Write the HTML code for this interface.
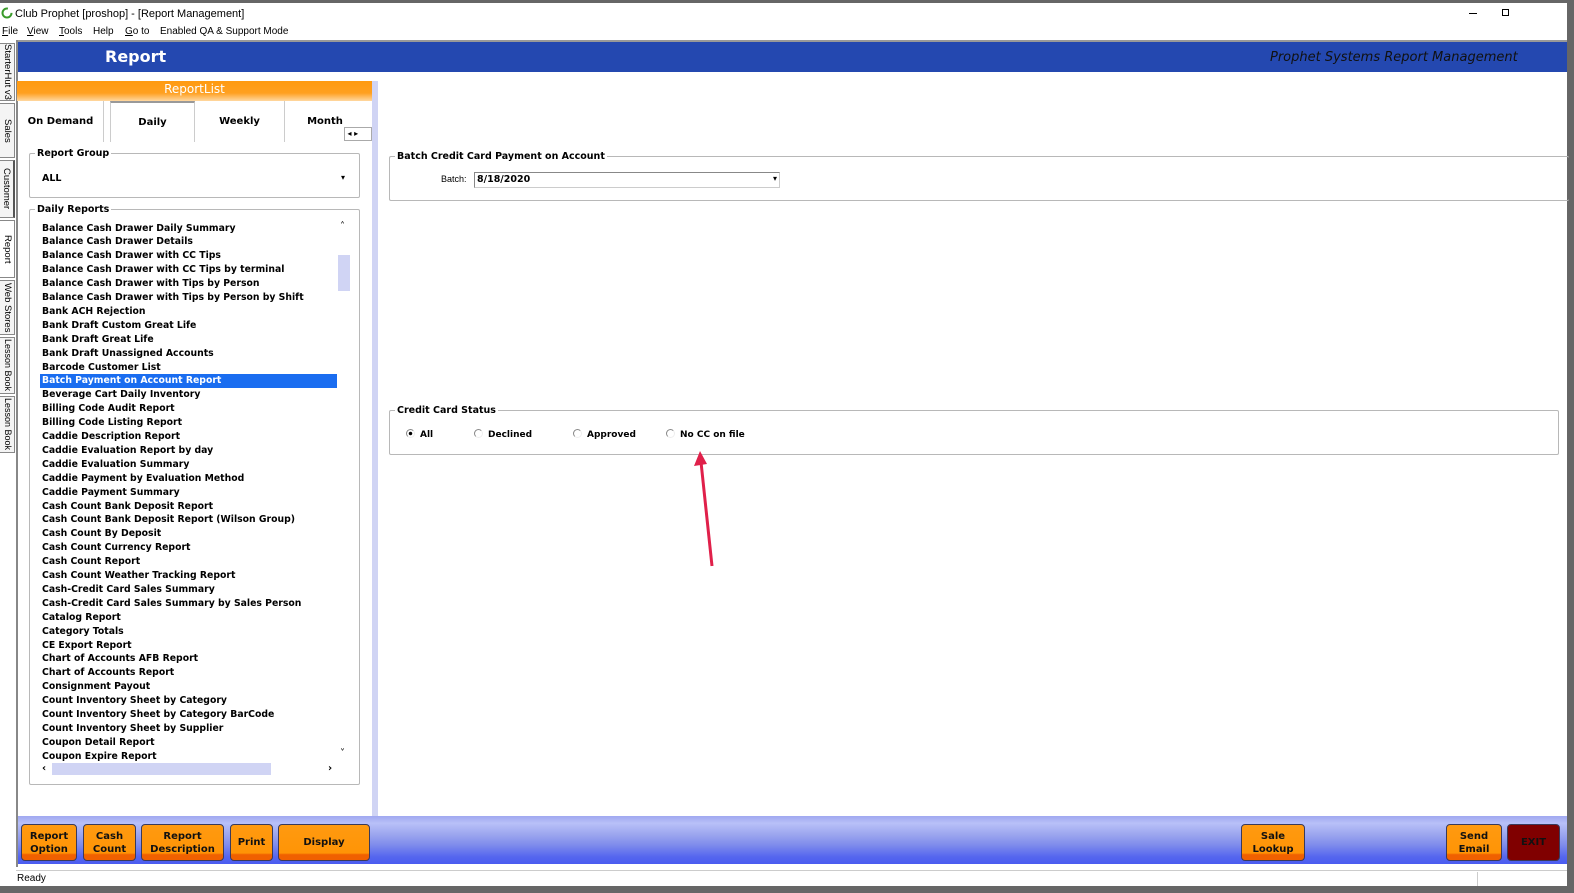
<!DOCTYPE html>
<html><head><meta charset="utf-8"><style>
*{margin:0;padding:0;box-sizing:border-box}
body{width:1574px;height:893px;background:#fff;font-family:"DejaVu Sans","Liberation Sans",sans-serif;position:relative;overflow:hidden}
.a{position:absolute}
.w{font-family:"Liberation Sans",sans-serif;font-size:11px;color:#000;white-space:nowrap}
fieldset{position:absolute;border:1px solid #b8b8b8;border-radius:2px}
legend{font-size:9.5px;font-weight:bold;padding:0 2px;margin-left:5px}
.li{position:absolute;left:42px;font-size:9.3px;font-weight:bold;color:#000;white-space:nowrap}
.btn{position:absolute;top:824px;height:37px;background:linear-gradient(#ff9a10 0%,#ff9406 80%,#f06000 85%,#f06000 100%);border:1px solid #3a3a5a;border-radius:4px;font-size:10px;font-weight:bold;text-align:center;display:flex;align-items:center;justify-content:center;line-height:13px;color:#111}
.vt{position:absolute;left:0;width:15px;border:1px solid #888;border-left:none;background:#f4f4f4;font-family:"Liberation Sans",sans-serif;font-size:9.5px;writing-mode:vertical-rl;text-align:center;line-height:13px;white-space:nowrap;overflow:hidden}
.tab{position:absolute;top:101px;height:41px;font-size:10px;font-weight:bold;display:flex;align-items:center;justify-content:center;border-right:1px solid #ccc}
.r{display:inline-block;width:9px;height:9px;border-radius:50%;border:1px solid #888;border-right-color:#eee;border-bottom-color:#eee;vertical-align:middle;margin-right:5px;position:relative;top:-1px}
</style></head><body>
<div class="a" style="left:0;top:0;width:1574px;height:3px;background:#666"></div>
<div class="a" style="left:1567px;top:0;width:7px;height:893px;background:#666"></div>
<div class="a" style="left:0;top:886px;width:1574px;height:7px;background:#666"></div>
<svg class="a" style="left:1px;top:7px" width="12" height="12"><circle cx="6" cy="6" r="4.5" fill="none" stroke="#3a9a2a" stroke-width="2" stroke-dasharray="22 6"/></svg>
<div class="a w" style="left:15px;top:8px">Club Prophet [proshop] - [Report Management]</div>
<div class="a" style="left:1469px;top:13px;width:8px;height:1px;background:#000"></div>
<div class="a" style="left:1502px;top:9px;width:7px;height:7px;border:1px solid #000"></div>
<div class="a w" style="left:2px;top:26px;font-size:10px"><u>F</u>ile</div>
<div class="a w" style="left:27px;top:26px;font-size:10px"><u>V</u>iew</div>
<div class="a w" style="left:59px;top:26px;font-size:10px"><u>T</u>ools</div>
<div class="a w" style="left:93px;top:26px;font-size:10px">Help</div>
<div class="a w" style="left:125px;top:26px;font-size:10px"><u>G</u>o to</div>
<div class="a w" style="left:160px;top:26px;font-size:10px">Enabled QA &amp; Support Mode</div>
<div class="vt" style="top:43px;height:58px">StarterHut v3</div>
<div class="vt" style="top:103px;height:55px">Sales</div>
<div class="vt" style="top:160px;height:58px;border-right:2px solid #555">Customer</div>
<div class="vt" style="top:220px;height:58px;background:#fff">Report</div>
<div class="vt" style="top:280px;height:55px">Web Stores</div>
<div class="vt" style="top:337px;height:57px;font-size:9px">Lesson Book</div>
<div class="vt" style="top:396px;height:57px;font-size:9px">Lesson Book</div>
<div class="a" style="left:16px;top:40px;width:1551px;height:2px;background:#999"></div>
<div class="a" style="left:16px;top:40px;width:2px;height:827px;background:#888"></div>
<div class="a" style="left:18px;top:42px;width:1549px;height:30px;background:#2448b0"></div>
<div class="a" style="left:105px;top:47px;color:#fff;font-size:16px;font-weight:bold">Report</div>
<div class="a" style="left:1270px;top:50px;color:#111;font-size:13px;font-style:italic">Prophet Systems Report Management</div>
<div class="a" style="left:17px;top:81px;width:355px;height:20px;background:linear-gradient(#ff9a10 0%,#ffa020 60%,#ffd8a0 100%)"></div>
<div class="a" style="left:17px;top:82px;width:355px;text-align:center;color:#fff;font-size:12px">ReportList</div>
<div class="a" style="left:372px;top:81px;width:6px;height:735px;background:#d0d4f4"></div>
<div class="tab" style="left:18px;width:86px">On Demand</div>
<div class="tab" style="left:110px;width:85px;border-top:2px solid #999;border-left:1px solid #ccc">Daily</div>
<div class="tab" style="left:195px;width:90px">Weekly</div>
<div class="tab" style="left:285px;width:80px;border-right:none">Month</div>
<div class="a" style="left:344px;top:127px;width:28px;height:14px;border:1px solid #aaa;font-size:8px;line-height:12px">&nbsp;◂ ▸</div>
<fieldset style="left:29px;top:148px;width:331px;height:50px"><legend>Report Group</legend>
<div style="position:absolute;left:12px;top:14px;font-size:9.5px;font-weight:bold">ALL</div>
<div style="position:absolute;left:311px;top:14px;font-size:8px">▾</div></fieldset>
<fieldset style="left:29px;top:204px;width:331px;height:581px"><legend>Daily Reports</legend></fieldset>
<div class="a" style="left:40px;top:374px;width:297px;height:14px;background:#1a6df0"></div>
<div class="a" style="left:338px;top:255px;width:12px;height:36px;background:#d0d4f4"></div>
<div class="a" style="left:52px;top:763px;width:219px;height:12px;background:#d0d4f4"></div>
<div class="a" style="left:340px;top:221px;font-size:10px">˄</div>
<div class="a" style="left:340px;top:748px;font-size:10px">˅</div>
<div class="a" style="left:42px;top:763px;font-size:10px;font-weight:bold">‹</div>
<div class="a" style="left:328px;top:763px;font-size:10px;font-weight:bold">›</div>
<div id="list"></div>
<fieldset style="left:389px;top:151px;width:1180px;height:50px;border-right:none"><legend>Batch Credit Card Payment on Account</legend>
<div style="position:absolute;left:51px;top:12px;font-size:9px;font-family:'Liberation Sans',sans-serif">Batch:</div>
<div style="position:absolute;left:84px;top:10px;width:306px;height:16px;border:1px solid #888;border-right-color:#ccc;border-bottom-color:#ccc;font-size:9.5px;font-weight:bold;padding:1px 2px">8/18/2020<span style="position:absolute;right:2px;top:1px;font-size:8px">▾</span></div></fieldset>
<fieldset style="left:389px;top:405px;width:1170px;height:50px"><legend>Credit Card Status</legend>
<div style="position:absolute;left:16px;top:14px;font-size:9px;font-weight:bold;white-space:nowrap"><span class="r" style="background:radial-gradient(#000 30%,transparent 40%)"></span>All</div>
<div style="position:absolute;left:84px;top:14px;font-size:9px;font-weight:bold"><span class="r"></span>Declined</div>
<div style="position:absolute;left:183px;top:14px;font-size:9px;font-weight:bold"><span class="r"></span>Approved</div>
<div style="position:absolute;left:276px;top:14px;font-size:9px;font-weight:bold;white-space:nowrap"><span class="r"></span>No CC on file</div></fieldset>
<svg class="a" style="left:690px;top:448px" width="30" height="125"><line x1="22" y1="118" x2="11" y2="14" stroke="#e0204a" stroke-width="3"/><polygon points="10,3 4,18 17,16" fill="#e0204a"/></svg>
<div class="a" style="left:18px;top:816px;width:1549px;height:48px;background:linear-gradient(#a0a8f0 0%,#b8c0f8 15%,#9aa4ee 40%,#7f8cec 60%,#5566ee 85%,#4a5cf0 100%)"></div>
<div class="btn" style="left:21px;width:56px">Report<br>Option</div>
<div class="btn" style="left:83px;width:53px">Cash<br>Count</div>
<div class="btn" style="left:141px;width:83px">Report<br>Description</div>
<div class="btn" style="left:230px;width:43px">Print</div>
<div class="btn" style="left:278px;width:92px">Display</div>
<div class="btn" style="left:1241px;width:64px">Sale<br>Lookup</div>
<div class="btn" style="left:1446px;width:56px">Send<br>Email</div>
<div class="btn" style="left:1507px;width:53px;background:#800000;color:#111">EXIT</div>
<div class="a w" style="left:17px;top:873px;font-size:10px">Ready</div>
<div class="a" style="left:16px;top:870px;width:1551px;height:1px;background:#ccc"></div>
<div class="a" style="left:1477px;top:872px;width:1px;height:14px;background:#ccc"></div>
<script>
var t=["Balance Cash Drawer Daily Summary","Balance Cash Drawer Details","Balance Cash Drawer with CC Tips","Balance Cash Drawer with CC Tips by terminal","Balance Cash Drawer with Tips by Person","Balance Cash Drawer with Tips by Person by Shift","Bank ACH Rejection","Bank Draft Custom Great Life","Bank Draft Great Life","Bank Draft Unassigned Accounts","Barcode Customer List","Batch Payment on Account Report","Beverage Cart Daily Inventory","Billing Code Audit Report","Billing Code Listing Report","Caddie Description Report","Caddie Evaluation Report by day","Caddie Evaluation Summary","Caddie Payment by Evaluation Method","Caddie Payment Summary","Cash Count Bank Deposit Report","Cash Count Bank Deposit Report (Wilson Group)","Cash Count By Deposit","Cash Count Currency Report","Cash Count Report","Cash Count Weather Tracking Report","Cash-Credit Card Sales Summary","Cash-Credit Card Sales Summary by Sales Person","Catalog Report","Category Totals","CE Export Report","Chart of Accounts AFB Report","Chart of Accounts Report","Consignment Payout","Count Inventory Sheet by Category","Count Inventory Sheet by Category BarCode","Count Inventory Sheet by Supplier","Coupon Detail Report","Coupon Expire Report"];
var h="";for(var i=0;i<t.length;i++){h+='<div class="li" style="top:'+(222.5+i*13.9)+'px'+(i==11?';color:#fff':'')+'">'+t[i]+'</div>';}
document.getElementById("list").innerHTML=h;
</script>
</body></html>
